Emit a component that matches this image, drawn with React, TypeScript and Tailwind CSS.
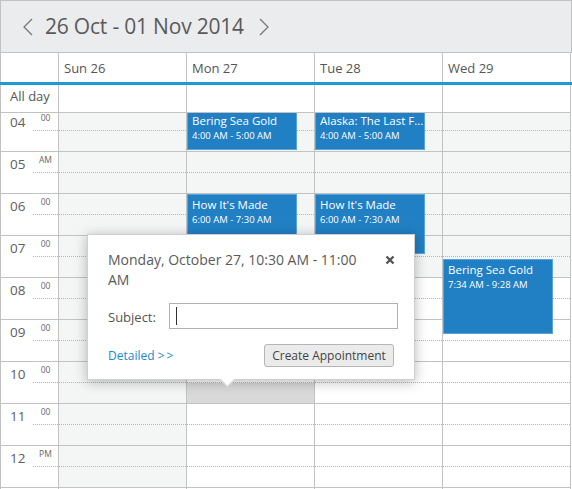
import React from "react";

const hours = [
  { h: "04", m: "00" },
  { h: "05", m: "AM" },
  { h: "06", m: "00" },
  { h: "07", m: "00" },
  { h: "08", m: "00" },
  { h: "09", m: "00" },
  { h: "10", m: "00" },
  { h: "11", m: "00" },
  { h: "12", m: "PM" },
];

const days = ["Sun 26", "Mon 27", "Tue 28", "Wed 29"];

type Ev = { title: string; time: string; top: number; height: number };

const events: Record<number, Ev[]> = {
  1: [
    { title: "Bering Sea Gold", time: "4:00 AM - 5:00 AM", top: 0, height: 40 },
    { title: "How It's Made", time: "6:00 AM - 7:30 AM", top: 84, height: 60 },
  ],
  2: [
    { title: "Alaska: The Last F...", time: "4:00 AM - 5:00 AM", top: 0, height: 40 },
    { title: "How It's Made", time: "6:00 AM - 7:30 AM", top: 84, height: 60 },
  ],
  3: [{ title: "Bering Sea Gold", time: "7:34 AM - 9:28 AM", top: 149, height: 75 }],
};

function DayColumn({ index }: { index: number }) {
  return (
    <div className="relative w-[128px] shrink-0 border-r border-r-[#c2c2c2]">
      {hours.map((hr, i) => {
        const shaded = index === 0 || i < 4;
        return (
          <div key={hr.h}>
            <div className={"h-[21px] border-b border-dotted border-b-[#b5b5b5] " + (shaded ? "bg-[#f4f5f5]" : "bg-white")} />
            <div
              className={
                "h-[21px] border-b border-b-[#c2c2c2] " +
                (index === 1 && i === 6 ? "bg-[#d9d9d9]" : shaded ? "bg-[#f4f5f5]" : "bg-white")
              }
            />
          </div>
        );
      })}
      <div className="h-[2px]" />
      {(events[index] || []).map((ev, k) => (
        <div
          key={k}
          className="absolute left-0 w-[110px] bg-[#2180c4] border border-[#5aa4dd] pl-[4px] pt-[1px] text-white overflow-hidden"
          style={{ top: ev.top, height: ev.height }}
        >
          <div className="text-[11.5px] leading-[17px] whitespace-nowrap">{ev.title}</div>
          <div className="text-[9.5px] leading-[14px] whitespace-nowrap">{ev.time}</div>
        </div>
      ))}
    </div>
  );
}

export default function App() {
  return (
    <div
      className="relative w-[572px] h-[489px] overflow-hidden bg-white text-[#555]"
      style={{ fontFamily: "'Open Sans', 'Noto Sans', sans-serif" }}
    >
      {/* Toolbar */}
      <div className="h-[53px] border border-[#c2c2c2] bg-[#ebecee] flex items-center">
        <svg width="12" height="18" viewBox="0 0 12 18" className="ml-[21px]">
          <polyline points="10,1 2,9 10,17" fill="none" stroke="#777" strokeWidth="1.3" />
        </svg>
        <div className="ml-[11px] text-[21px] leading-none text-[#5a5a5a] tracking-[-0.2px]">26 Oct - 01 Nov 2014</div>
        <svg width="12" height="18" viewBox="0 0 12 18" className="ml-[14px]">
          <polyline points="2,1 10,9 2,17" fill="none" stroke="#777" strokeWidth="1.3" />
        </svg>
      </div>

      {/* Day header row */}
      <div className="flex h-[32px] border-b-[3px] border-b-[#1e9ad6] w-[572px]">
        <div className="w-[59px] shrink-0 border-l border-r border-[#c2c2c2]" />
        {days.map((d) => (
          <div key={d} className="w-[128px] shrink-0 border-r border-r-[#c2c2c2] pl-[5px] pt-[6px] text-[13px] leading-[18px]">
            {d}
          </div>
        ))}
      </div>

      {/* All day row */}
      <div className="flex h-[28px]">
        <div className="w-[59px] shrink-0 border-l border-r border-b border-[#c2c2c2] pl-[9px] pt-[1px] text-[13px] leading-[20px]">
          All day
        </div>
        {days.map((d) => (
          <div key={d} className="w-[128px] shrink-0 border-r border-b border-[#c2c2c2]" />
        ))}
      </div>

      {/* Body */}
      <div className="h-[376px] overflow-hidden">
        <div className="flex mt-[-3px]">
          <div className="w-[59px] shrink-0 border-l border-r border-[#c2c2c2]">
            {hours.map((hr) => (
              <div key={hr.h} className="h-[42px] border-b border-b-[#c2c2c2] flex">
                <div className="w-[32px] pl-[9px] pt-[3px] text-[13.5px] leading-[18px] text-[#606060]">{hr.h}</div>
                <div className="w-[25px] flex flex-col">
                  <div className="h-[21px] border-b border-dotted border-b-[#b5b5b5] text-center text-[8.5px] leading-[10px] pt-[3px] text-[#666]">
                    {hr.m}
                  </div>
                </div>
              </div>
            ))}
          </div>
          {days.map((d, i) => (
            <DayColumn key={d} index={i} />
          ))}
        </div>
      </div>

      {/* Popup */}
      <div className="absolute left-[87px] top-[234px] w-[328px] h-[146px] bg-white border border-[#cfcfcf] shadow-[0_2px_12px_rgba(0,0,0,0.28)]">
        <div className="pl-[20px] pt-[15px]">
          <div className="w-[262px] text-[14px] leading-[20px] text-[#5a5a5a]">
            Monday, October 27, 10:30 AM - 11:00 AM
          </div>
          <div className="flex items-center mt-[13px]">
            <div className="w-[61px] text-[13px] leading-[20px] pt-[1px] text-[#555]">Subject:</div>
            <div className="w-[229px] h-[26px] border border-[#b0b0b0] flex items-center">
              <div className="ml-[6px] w-px h-[18px] bg-[#333]" />
            </div>
          </div>
          <div className="flex items-center justify-between w-[286px] mt-[15px]">
            <div className="text-[12px] text-[#1e88d0]">
              Detailed <span className="tracking-[2px]">&gt;&gt;</span>
            </div>
            <div className="w-[130px] h-[23px] border border-[#b5b5b5] rounded-[3px] bg-[#ebebeb] text-[12px] leading-[21px] text-center text-[#444]">
              Create Appointment
            </div>
          </div>
        </div>
        <svg width="10" height="10" viewBox="0 0 10 10" className="absolute right-[19px] top-[20px]">
          <path d="M1.5 1.5 L8.5 8.5 M8.5 1.5 L1.5 8.5" stroke="#555" strokeWidth="2.4" />
        </svg>
        <div className="absolute left-[134px] bottom-[-6px] w-[11px] h-[11px] rotate-45 bg-white border-r border-b border-[#cfcfcf]" />
      </div>
    </div>
  );
}
